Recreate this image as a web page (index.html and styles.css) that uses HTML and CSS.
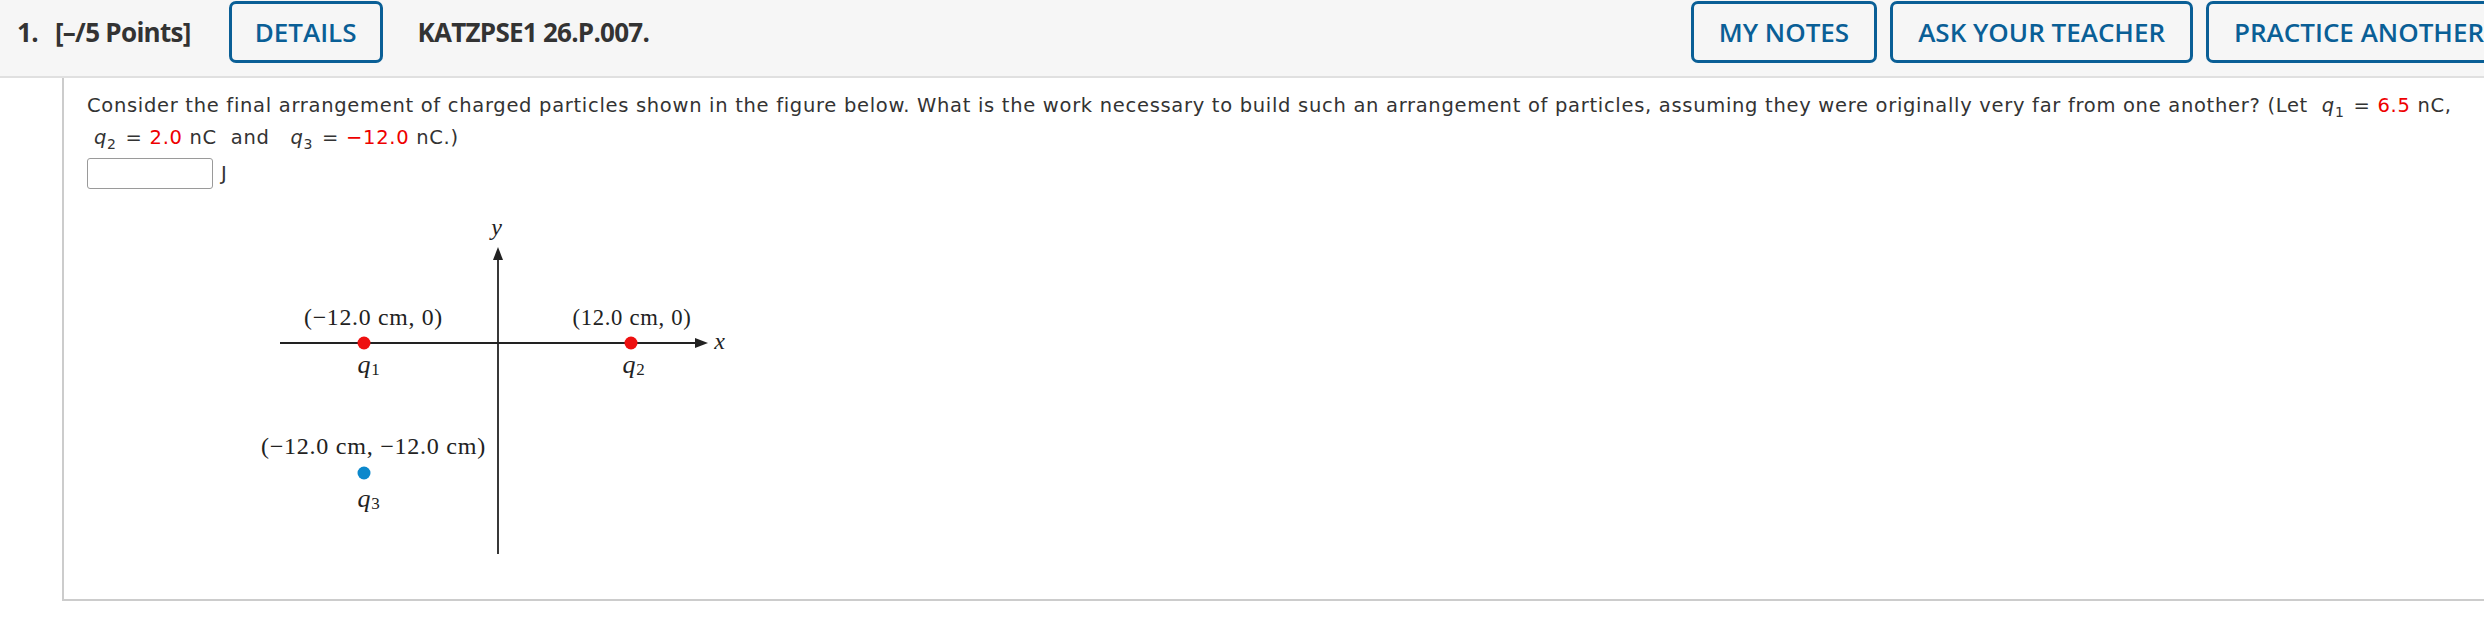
FILE: index.html
```html
<!DOCTYPE html>
<html>
<head>
<meta charset="utf-8">
<link rel="stylesheet" href="styles.css">
</head>
<body>
<div class="page">
  <div class="qhead">
    <div class="qnum"><span>1.</span><span class="pts">[–/5 Points]</span></div>
    <button class="btn details">DETAILS</button>
    <div class="qcode">KATZPSE1 26.P.007.</div>
    <div class="actions">
      <button class="btn">MY NOTES</button>
      <button class="btn">ASK YOUR TEACHER</button>
      <button class="btn">PRACTICE ANOTHER</button>
    </div>
  </div>
  <div class="qbody">
    <p class="prompt">Consider the final arrangement of charged particles shown in the figure below. What is the work necessary to build such an arrangement of particles, assuming they were originally very far from one another? (Let <span class="q">q<sub>1</sub></span> = <span class="red">6.5</span> nC,<br><span class="q">q<sub>2</sub></span> = <span class="red">2.0</span> nC <span class="word">and</span> <span class="q">q<sub>3</sub></span> = <span class="red">−12.0</span> nC.)</p>
    <div class="answer"><span class="field"></span><span class="unit">J</span></div>
    <svg class="figure" width="500" height="360" viewBox="0 0 500 360">
      <g fill="#222" font-family="'Liberation Serif', 'Times New Roman', serif">
        <text x="247" y="28" font-size="24" font-style="italic" text-anchor="middle">y</text>
        <text x="470" y="142" font-size="24" font-style="italic" text-anchor="middle">x</text>
        <text x="123.5" y="118" font-size="23" text-anchor="middle" textLength="139" lengthAdjust="spacingAndGlyphs">(−12.0 cm, 0)</text>
        <text x="382" y="118" font-size="23" text-anchor="middle" textLength="119" lengthAdjust="spacingAndGlyphs">(12.0 cm, 0)</text>
        <text x="123.5" y="247" font-size="23" text-anchor="middle" textLength="225" lengthAdjust="spacingAndGlyphs">(−12.0 cm, −12.0 cm)</text>
        <text x="119" y="166" font-size="26" text-anchor="middle"><tspan font-style="italic">q</tspan><tspan font-size="17" dy="2">1</tspan></text>
        <text x="384" y="166" font-size="26" text-anchor="middle"><tspan font-style="italic">q</tspan><tspan font-size="17" dy="2">2</tspan></text>
        <text x="119" y="300" font-size="26" text-anchor="middle"><tspan font-style="italic">q</tspan><tspan font-size="17" dy="2">3</tspan></text>
      </g>
      <g stroke="#222" stroke-width="1.8" fill="none">
        <line x1="248" y1="50" x2="248" y2="347"/>
        <line x1="30" y1="136" x2="448" y2="136"/>
      </g>
      <g fill="#222">
        <polygon points="248,40 243,53 253,53"/>
        <polygon points="458,136 445,131 445,141"/>
      </g>
      <circle cx="114" cy="136" r="6.5" fill="#ee1010"/>
      <circle cx="381" cy="136" r="6.5" fill="#ee1010"/>
      <circle cx="114" cy="266" r="6.5" fill="#0c88cc"/>
    </svg>
  </div>
</div>
</body>
</html>
```

FILE: styles.css
```css
html, body {
  margin: 0;
  padding: 0;
  background: #ffffff;
  overflow: hidden;
}

.page {
  width: 2512px;
}

.qhead {
  display: flex;
  align-items: center;
  height: 78px;
  box-sizing: border-box;
  padding: 2px 0 14px 17px;
  background: #f6f6f6;
  border-bottom: 2px solid #e0e0e0;
  font-family: "Open Sans", "Liberation Sans", sans-serif;
}

.qnum {
  display: flex;
  gap: 17px;
  font-size: 26px;
  font-weight: 700;
  letter-spacing: -0.7px;
  color: #333333;
  white-space: nowrap;
}

.qcode {
  margin-left: 35px;
  font-size: 26px;
  font-weight: 700;
  letter-spacing: -0.75px;
  color: #333333;
}

.btn {
  height: 62px;
  box-sizing: border-box;
  padding: 0 25px;
  background: #f6f6f6;
  border: 3px solid #0a5f96;
  border-radius: 7px;
  color: #0a5f96;
  font-family: "Open Sans", "Liberation Sans", sans-serif;
  font-size: 26px;
  font-weight: 600;
  white-space: nowrap;
}

.details {
  margin-left: 38px;
  padding: 0 23px;
}

.actions {
  display: flex;
  gap: 13px;
  margin-left: auto;
}

.qbody {
  margin-left: 62px;
  border-left: 2px solid #cccccc;
  border-bottom: 2px solid #cccccc;
  padding: 12px 0 32px 23px;
  font-family: "DejaVu Sans", Verdana, sans-serif;
  font-size: 19.5px;
  letter-spacing: 0.7px;
  color: #333333;
}

.prompt {
  margin: 0;
  line-height: 32px;
}

.q {
  font-style: italic;
  margin: 0 2px 0 7px;
}

.word {
  margin: 0 7px;
}

.q sub {
  font-style: normal;
  font-size: 14px;
  line-height: 0;
  vertical-align: -5px;
}

.red {
  color: #ee0000;
}

.answer {
  display: flex;
  align-items: center;
  margin-top: 3px;
  height: 33px;
}

.field {
  display: inline-block;
  width: 124px;
  height: 29px;
  border: 1px solid #9a9a9a;
  border-radius: 3px;
  background: #ffffff;
}

.unit {
  margin-left: 8px;
}

.figure {
  display: block;
  margin: 17px 0 0 163px;
}
```
